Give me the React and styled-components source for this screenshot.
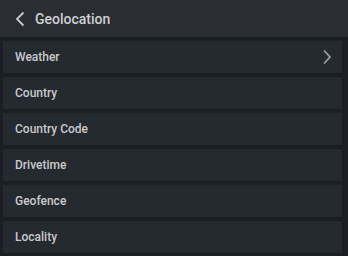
import React from 'react'
import styled, { createGlobalStyle } from 'styled-components'

const GlobalStyle = createGlobalStyle`
  body {
    margin: 0;
    background: #1b1f25;
    font-family: Roboto, "Liberation Sans", sans-serif;
  }
`

const Page = styled.div`
  width: 348px;
  height: 256px;
  background: #1b1f25;
  overflow: hidden;
`

const Header = styled.div`
  height: 37px;
  display: flex;
  align-items: center;
  gap: 10px;
  padding-left: 15px;
  background: #2a2d32;
  color: #cfd0d2;
  font-size: 14px;
  font-weight: 500;
`

const List = styled.div`
  display: flex;
  flex-direction: column;
  gap: 4px;
  padding: 4px 6px 0 3px;
`

const Row = styled.div`
  height: 32px;
  display: flex;
  align-items: center;
  justify-content: space-between;
  padding: 0 10px 0 12px;
  background: #252930;
  color: #c9cacc;
  font-size: 12px;
  font-weight: 500;
`

const Chevron = ({ dir }) => (
  <svg width="10" height="16" viewBox="0 0 10 16">
    <path
      d={dir === 'left' ? 'M8.5 1.5 L2 8 L8.5 14.5' : 'M2 1.5 L8 8 L2 14.5'}
      fill="none"
      stroke={dir === 'left' ? '#c9cacc' : '#9a9ca0'}
      strokeWidth="1.8"
    />
  </svg>
)

const items = ['Weather', 'Country', 'Country Code', 'Drivetime', 'Geofence', 'Locality']

export default function App () {
  return (
    <Page>
      <GlobalStyle />
      <Header>
        <Chevron dir="left" />
        Geolocation
      </Header>
      <List>
        {items.map((item, i) => (
          <Row key={item}>
            {item}
            {i === 0 && <Chevron dir="right" />}
          </Row>
        ))}
      </List>
    </Page>
  )
}
